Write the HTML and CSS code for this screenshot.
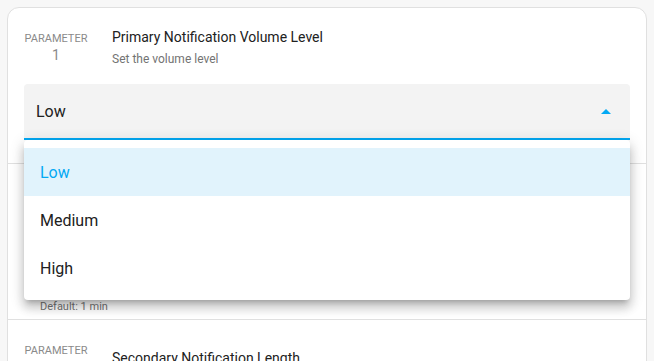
FILE: index.html
```html
<!DOCTYPE html>
<html lang="en">
<head>
    <meta charset="UTF-8">
    <meta name="viewport" content="width=device-width, initial-scale=1.0">
    <title>Device Parameters</title>
    <link rel="stylesheet" href="styles.css">
</head>
<body>
    <div class="card">
        <div class="param-row">
            <div class="param-head">
                <div class="param-id">
                    <span class="param-label">Parameter</span>
                    <span class="param-num">1</span>
                </div>
                <div class="param-info">
                    <div class="param-title">Primary Notification Volume Level</div>
                    <div class="param-desc">Set the volume level</div>
                </div>
            </div>
            <div class="select open">
                <span class="select-value">Low</span>
                <span class="select-arrow"></span>
                <ul class="menu">
                    <li class="menu-item selected">Low</li>
                    <li class="menu-item">Medium</li>
                    <li class="menu-item">High</li>
                </ul>
            </div>
        </div>

        <div class="param-row param-row-helper">
            <div class="param-head">
                <div class="param-id">
                    <span class="param-label">Parameter</span>
                    <span class="param-num">2</span>
                </div>
                <div class="param-info">
                    <div class="param-title">Primary Notification Length</div>
                    <div class="param-desc">Set the notification duration</div>
                </div>
            </div>
            <div class="select">
                <span class="select-value">1 min</span>
                <span class="select-arrow down"></span>
            </div>
            <div class="helper">Default: 1 min</div>
        </div>

        <div class="param-row">
            <div class="param-head">
                <div class="param-id">
                    <span class="param-label">Parameter</span>
                    <span class="param-num">3</span>
                </div>
                <div class="param-info param-info-low">
                    <div class="param-title">Secondary Notification Length</div>
                </div>
            </div>
        </div>
    </div>
</body>
</html>
```

FILE: styles.css
```css
:root {
    /* Customizable variables */
    --text-color: #212121;
    --secondary-color: #737373;
    --label-color: #8a8a8a;
    --page-color: #f7f7f7;
    --card-color: #fff;
    --border-color: #e0e0e0;
    --field-color: #f3f3f3;
    --accent-color: #03a9f4;
    --selected-color: #e1f3fc;
}

* {
    box-sizing: border-box;
}

body {
    font-family: Roboto, "Noto Sans", sans-serif;
    margin: 0;
    padding: 7px;
    background-color: var(--page-color);
    color: var(--text-color);
}

.card {
    background-color: var(--card-color);
    border: 1px solid var(--border-color);
    border-radius: 12px;
}

.param-row {
    padding: 19px 16px 23px;
    border-bottom: 1px solid var(--border-color);
}

.param-row-helper {
    padding-bottom: 4px;
}

.param-head {
    display: flex;
    gap: 24px;
    margin-bottom: 17px;
}

.param-id {
    display: flex;
    flex-direction: column;
    align-items: center;
    width: 64px;
    margin-top: 4px;
    color: var(--label-color);
}

.param-label {
    font-size: 11px;
    line-height: 16px;
    text-transform: uppercase;
}

.param-num {
    font-size: 14px;
    line-height: 16px;
}

.param-title {
    font-size: 14px;
    line-height: 20px;
}

.param-desc {
    margin-top: 4px;
    font-size: 12px;
    line-height: 16px;
    color: var(--secondary-color);
}

.param-info-low {
    margin-top: 9px;
}

.select {
    position: relative;
    display: flex;
    align-items: center;
    justify-content: space-between;
    height: 56px;
    padding: 0 19px 0 12px;
    background-color: var(--field-color);
    border-radius: 4px 4px 0 0;
    border-bottom: 1px solid #8c8c8c;
    font-size: 16px;
}

.select.open {
    border-bottom: 2px solid var(--accent-color);
}

.select-arrow {
    width: 0;
    height: 0;
    border-left: 5px solid transparent;
    border-right: 5px solid transparent;
    border-bottom: 5px solid var(--accent-color);
}

.select-arrow.down {
    border-bottom: none;
    border-top: 5px solid #757575;
}

.menu {
    position: absolute;
    z-index: 2;
    top: 100%;
    left: 0;
    right: 0;
    margin: 0;
    margin-top: 2px;
    padding: 8px 0;
    list-style: none;
    background-color: var(--card-color);
    border-radius: 4px;
    box-shadow: 0 5px 5px -3px rgba(0, 0, 0, 0.2), 0 8px 10px 1px rgba(0, 0, 0, 0.14), 0 3px 14px 2px rgba(0, 0, 0, 0.12);
}

.menu-item {
    height: 48px;
    line-height: 50px;
    padding: 0 16px;
    font-size: 16px;
}

.menu-item.selected {
    background-color: var(--selected-color);
    color: var(--accent-color);
}

.helper {
    margin-top: 3px;
    padding-left: 16px;
    font-size: 11px;
    line-height: 16px;
    color: var(--secondary-color);
}
```
